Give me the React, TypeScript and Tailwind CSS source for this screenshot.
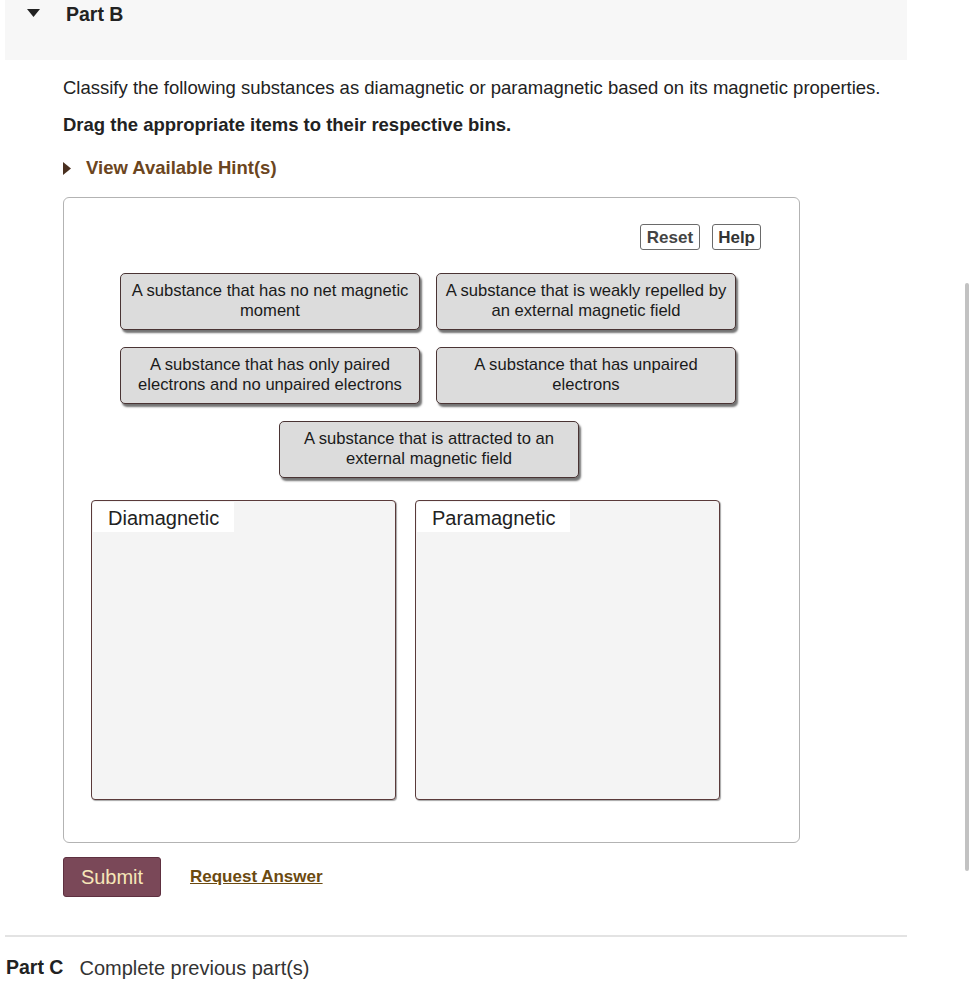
import React from "react";

const cards: string[][] = [
  ["A substance that has no net magnetic", "moment"],
  ["A substance that is weakly repelled by", "an external magnetic field"],
  ["A substance that has only paired", "electrons and no unpaired electrons"],
  ["A substance that has unpaired", "electrons"],
];

const Card = ({ lines }: { lines: string[] }) => (
  <div className="w-[300px] h-[57px] flex flex-col items-center justify-center pb-[2px] text-center text-[16.6px] leading-[20px] text-[#1a1a1a] bg-[#dcdcdc] border border-[#4a3434] rounded-[5px] shadow-[2px_3px_2px_rgba(0,0,0,0.55)] whitespace-nowrap">
    {lines.map((l) => (
      <span key={l}>{l}</span>
    ))}
  </div>
);

const Bin = ({ label }: { label: string }) => (
  <div className="w-[305px] h-[300px] bg-[#f4f4f4] border border-[#5a3a3a] rounded-[4px] shadow-[1px_1px_1px_rgba(0,0,0,0.35)]">
    <div className="inline-block bg-white mt-[1px] ml-[1px] pl-[15px] pr-[15px] h-[30px] leading-[32px] text-[20px] text-[#222]">
      {label}
    </div>
  </div>
);

export default function App() {
  return (
    <div className="relative min-h-[983px] bg-white font-['Liberation_Sans',Arial,sans-serif] text-[#222]">
      <div className="w-[902px] ml-[5px]">
        <div className="h-[60px] bg-[#f7f7f7] flex items-start">
          <svg className="mt-[9px] ml-[22px]" width="13" height="8" viewBox="0 0 13 8">
            <path d="M0 0 L13 0 L6.5 8 Z" fill="#222" />
          </svg>
          <span className="ml-[26px] mt-[0px] text-[19.5px] font-bold text-[#222]">Part B</span>
        </div>

        <div className="pl-[58px]">
          <p className="mt-[16px] text-[18.5px] leading-[24px]">
            Classify the following substances as diamagnetic or paramagnetic based on its magnetic properties.
          </p>
          <p className="mt-[13px] text-[18.5px] leading-[24px] font-bold">Drag the appropriate items to their respective bins.</p>
          <div className="mt-[19px] flex items-center h-[24px]">
            <svg width="8" height="13" viewBox="0 0 8 13">
              <path d="M0 0 L8 6.5 L0 13 Z" fill="#4a3020" />
            </svg>
            <span className="ml-[15px] text-[18.5px] font-bold text-[#6b4520]">View Available Hint(s)</span>
          </div>

          <div className="mt-[17px] w-[737px] h-[646px] border border-[#b3b3b3] rounded-[6px] bg-white">
            <div className="flex justify-end gap-[12px] pr-[38px] pt-[26px]">
              <button className="h-[26px] px-[6px] border border-[#6a6a6a] rounded-[3px] text-[17px] font-bold text-[#444] leading-none">
                Reset
              </button>
              <button className="h-[26px] px-[5px] border border-[#6a6a6a] rounded-[3px] text-[17px] font-bold text-[#333] leading-none">
                Help
              </button>
            </div>

            <div className="mt-[23px] ml-[56px] grid grid-cols-[300px_300px] gap-x-[16px] gap-y-[17px]">
              {cards.map((c) => (
                <Card key={c[0]} lines={c} />
              ))}
            </div>
            <div className="mt-[17px] ml-[215px]">
              <Card lines={["A substance that is attracted to an", "external magnetic field"]} />
            </div>

            <div className="mt-[22px] ml-[27px] flex gap-[19px]">
              <Bin label="Diamagnetic" />
              <Bin label="Paramagnetic" />
            </div>
          </div>

          <div className="mt-[14px] flex items-center">
            <button className="w-[98px] h-[40px] bg-[#7a4858] border border-[#5e3040] rounded-[3px] text-[20px] text-[#f6e6b8]">
              Submit
            </button>
            <a className="ml-[29px] text-[17px] font-bold text-[#6b4a10] underline">Request Answer</a>
          </div>
        </div>

        <div className="mt-[38px] border-t-2 border-[#e3e3e3]" />
        <div className="mt-[16px] ml-[1px] text-[19.5px] flex gap-[16px]">
          <span className="font-bold">Part C</span>
          <span className="text-[#333] text-[20px]">Complete previous part(s)</span>
        </div>
      </div>

      <div className="absolute left-[965px] top-[283px] w-[4px] h-[588px] rounded-full bg-[#c2c2c2]" />
    </div>
  );
}
